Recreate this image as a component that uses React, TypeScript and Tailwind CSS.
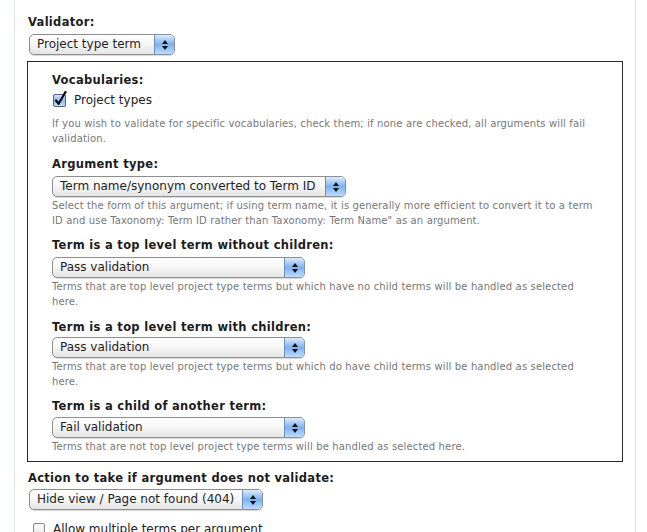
import type { ReactNode } from "react";

const font = { fontFamily: '"DejaVu Sans", Verdana, sans-serif' };

function Select({ value, width }: { value: string; width: string }) {
  return (
    <div
      className={`flex h-[21px] items-stretch overflow-hidden rounded-[5px] border border-[#8e8e8e] bg-gradient-to-b from-white via-[#f6f6f6] to-[#e4e4e4] shadow-[0_1px_1px_rgba(0,0,0,0.15)] ${width}`}
    >
      <span className="flex-1 truncate pl-[7px] text-[12px] leading-[19px] text-[#1e1e1e]">{value}</span>
      <span className="flex w-[20px] flex-col items-center justify-center gap-[2px] border-l border-[#6a8ec4] bg-gradient-to-b from-[#dcebfd] via-[#7eb1ef] to-[#bcdcfd]">
        <svg width="6" height="4" viewBox="0 0 6 4">
          <path d="M3 0 L6 4 L0 4 Z" fill="#111" />
        </svg>
        <svg width="6" height="4" viewBox="0 0 6 4">
          <path d="M0 0 L6 0 L3 4 Z" fill="#111" />
        </svg>
      </span>
    </div>
  );
}

function Heading({ children, className = "" }: { children: ReactNode; className?: string }) {
  return <div className={`text-[11.5px] font-bold leading-[16px] tracking-[0.3px] text-[#1c1c1c] ${className}`}>{children}</div>;
}

function Help({ children, className = "" }: { children: ReactNode; className?: string }) {
  return <div className={`pr-[25px] text-[10px] leading-[15px] tracking-[0.14px] text-[#777] ${className}`}>{children}</div>;
}

function Field({ label, value, help, width, className = "", gap = "mt-[4px]" }: { label: string; value: string; help: string; width: string; className?: string; gap?: string }) {
  return (
    <div className={className}>
      <Heading>{label}</Heading>
      <div className={gap}>
        <Select value={value} width={width} />
      </div>
      <Help className="mt-[1px]">{help}</Help>
    </div>
  );
}

export default function App() {
  return (
    <div className="min-h-[532px] bg-white" style={font}>
      <div className="ml-[14px] min-h-[532px] w-[622px] border-x border-[#dfe3e6] pl-[12px] pt-[14px]">
        <Heading className="pl-px">Validator:</Heading>
        <div className="mt-[4px] ml-[2px]">
          <Select value="Project type term" width="w-[146px]" />
        </div>

        <div className="mt-[6px] w-[596px] border border-[#2a2a2a] pb-[7px] pl-[24px] pt-[10px]">
          <Heading>Vocabularies:</Heading>
          <label className="mt-[4px] flex h-[16px] items-center gap-[7px] pl-px">
            <svg width="14" height="16" viewBox="0 0 14 16" className="-mt-[2px]">
              <defs>
                <linearGradient id="cb" x1="0" y1="0" x2="0" y2="1">
                  <stop offset="0" stopColor="#d7e8fb" />
                  <stop offset="0.5" stopColor="#8dbbef" />
                  <stop offset="1" stopColor="#c4e0fc" />
                </linearGradient>
              </defs>
              <rect x="0.5" y="3.5" width="12" height="12" rx="1.5" fill="url(#cb)" stroke="#4c6790" />
              <path d="M3 9.5 L5.6 12.8 L12.5 1" fill="none" stroke="#0a0a0a" strokeWidth="2.2" strokeLinecap="round" strokeLinejoin="round" />
            </svg>
            <span className="text-[12px] text-[#222]">Project types</span>
          </label>
          <Help className="mt-[8px]">
            If you wish to validate for specific vocabularies, check them; if none are checked, all arguments will fail validation.
          </Help>

          <Field
            className="mt-[10px]"
            label="Argument type:"
            value="Term name/synonym converted to Term ID"
            width="w-[294px]"
            help={'Select the form of this argument; if using term name, it is generally more efficient to convert it to a term ID and use Taxonomy: Term ID rather than Taxonomy: Term Name" as an argument.'}
          />
          <Field
            className="mt-[9px]"
            label="Term is a top level term without children:"
            value="Pass validation"
            width="w-[253px]"
            help="Terms that are top level project type terms but which have no child terms will be handled as selected here."
          />
          <Field
            className="mt-[10px]"
            gap="mt-[2px]"
            label="Term is a top level term with children:"
            value="Pass validation"
            width="w-[253px]"
            help="Terms that are top level project type terms but which do have child terms will be handled as selected here."
          />
          <Field
            className="mt-[9px]"
            gap="mt-[3px]"
            label="Term is a child of another term:"
            value="Fail validation"
            width="w-[253px]"
            help="Terms that are not top level project type terms will be handled as selected here."
          />
        </div>

        <Heading className="mt-[8px] pl-px">Action to take if argument does not validate:</Heading>
        <div className="mt-[3px] ml-[2px]">
          <Select value="Hide view / Page not found (404)" width="w-[234px]" />
        </div>

        <label className="mt-[11px] flex items-center gap-[8px] pl-[6px]">
          <span className="h-[12px] w-[12px] rounded-[2px] border border-[#8a8a8a] bg-gradient-to-b from-white to-[#e6e6e6]" />
          <span className="text-[12px] leading-[16px] text-[#222]">Allow multiple terms per argument</span>
        </label>
      </div>
    </div>
  );
}
